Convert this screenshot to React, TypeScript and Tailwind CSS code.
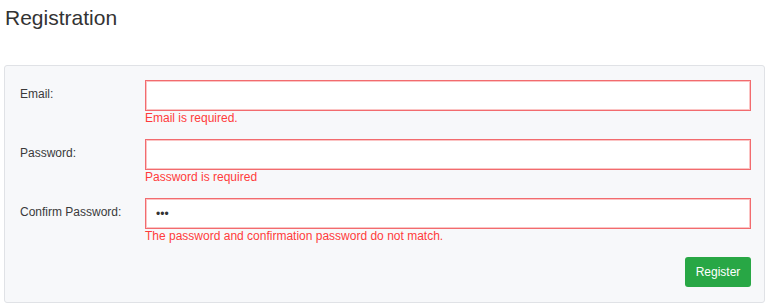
import React from "react";

type Field = {
  label: string;
  type: string;
  value: string;
  error: string;
};

const fields: Field[] = [
  { label: "Email:", type: "text", value: "", error: "Email is required." },
  { label: "Password:", type: "password", value: "", error: "Password is required" },
  {
    label: "Confirm Password:",
    type: "password",
    value: "abc",
    error: "The password and confirmation password do not match.",
  },
];

export default function App() {
  return (
    <div className="h-[306px] w-[768px] bg-white font-['Liberation_Sans',Arial,sans-serif] text-[#333]">
      <h2 className="pl-[5px] pt-[5px] text-[21px] leading-[25px] font-normal text-[#333]">Registration</h2>

      <form
        className="ml-[4px] mt-[35px] w-[761px] rounded-[3px] border border-[#e0e2e6] bg-[#f7f8fa] pb-[15px] pl-[15px] pr-[13px] pt-[14px]"
        onSubmit={(e) => e.preventDefault()}
      >
        {fields.map((f) => (
          <div key={f.label} className="mb-[14px] flex last:mb-[15px]">
            <label className="w-[125px] shrink-0 pt-[7px] text-[12px] leading-[14px] text-[#3a3a3a]">{f.label}</label>
            <div className="flex-1">
              <input
                type={f.type}
                defaultValue={f.value}
                readOnly
                className="block h-[31px] w-full border border-[#f26b6e] bg-white px-[10px] text-[12px] text-[#333] shadow-[inset_0_0_0_1px_#fbc4c4] outline-none"
              />
              <div className="text-[12px] leading-[14px] text-[#ff3b3b]">{f.error}</div>
            </div>
          </div>
        ))}

        <div className="flex justify-end">
          <button
            type="submit"
            className="h-[30px] w-[66px] rounded-[3px] bg-[#28a745] text-[12px] text-white"
          >
            Register
          </button>
        </div>
      </form>
    </div>
  );
}
